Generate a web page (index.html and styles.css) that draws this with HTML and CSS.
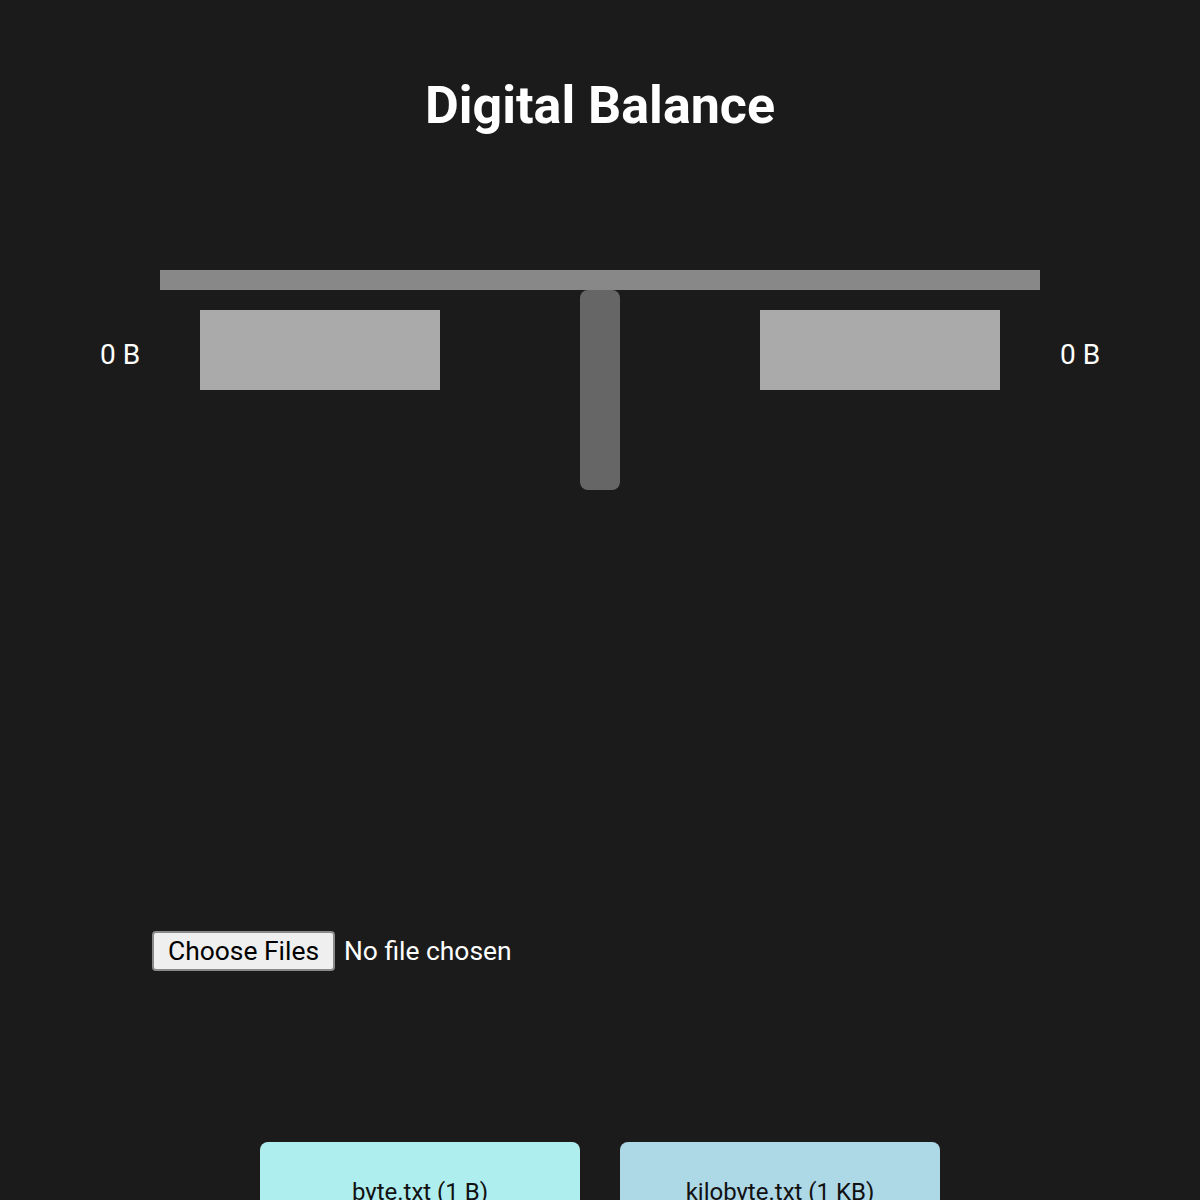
FILE: index.html
```html
<!DOCTYPE html>
<html lang="en">
<head>
<meta charset="utf-8">
<title>Digital Balance</title>
<link rel="stylesheet" href="styles.css">
</head>
<body>
  <h1 class="title">Digital Balance</h1>
  <div class="balance">
    <div class="weight-label">0 B</div>
    <div class="scale">
      <div class="beam"></div>
      <div class="lower">
        <div class="pan"></div>
        <div class="stand"></div>
        <div class="pan"></div>
      </div>
    </div>
    <div class="weight-label">0 B</div>
  </div>
  <div class="upload">
    <input type="file" multiple class="file-input">
  </div>
  <div class="cards">
    <div class="card card-byte">byte.txt (1 B)</div>
    <div class="card card-kb">kilobyte.txt (1 KB)</div>
  </div>
</body>
</html>
```
FILE: styles.css
```css
html, body {
  margin: 0;
  padding: 0;
  background: #1b1b1b;
  color: #ffffff;
  font-family: Roboto, "Liberation Sans", sans-serif;
  height: 1200px;
  overflow: hidden;
}

.title {
  margin: 75px 0 0;
  font-size: 52px;
  font-weight: 700;
  line-height: 61px;
  text-align: center;
}

.balance {
  width: 1000px;
  margin: 134px auto 0;
  display: flex;
  align-items: flex-start;
  gap: 20px;
}

.weight-label {
  width: 40px;
  margin-top: 68px;
  font-size: 28px;
  line-height: 33px;
  white-space: nowrap;
}

.scale {
  width: 880px;
  display: flex;
  flex-direction: column;
}

.beam {
  height: 20px;
  background: #888888;
}

.lower {
  display: flex;
  justify-content: space-between;
  align-items: flex-start;
  padding: 0 40px;
}

.pan {
  width: 240px;
  height: 80px;
  margin-top: 20px;
  background: #aaaaaa;
}

.stand {
  width: 40px;
  height: 200px;
  background: #666666;
  border-radius: 8px;
}

.upload {
  width: 900px;
  margin: 441px auto 0;
  padding-left: 2px;
  box-sizing: border-box;
}

.file-input {
  display: block;
  font-family: Roboto, "Liberation Sans", sans-serif;
  font-size: 26.4px;
  color: #ffffff;
  height: 40px;
}

.file-input::file-selector-button {
  font: inherit;
  height: 40px;
  padding: 0 14px;
  margin-right: 9px;
  background: #efefef;
  color: #000000;
  border: 2px solid #8a8a8a;
  border-radius: 4px;
}

.cards {
  display: flex;
  justify-content: center;
  gap: 40px;
  margin-top: 171px;
}

.card {
  width: 320px;
  height: 100px;
  border-radius: 8px;
  display: flex;
  align-items: center;
  justify-content: center;
  font-size: 24px;
  color: #111111;
}

.card-byte {
  background: #afeeee;
}

.card-kb {
  background: #add8e6;
}
```
